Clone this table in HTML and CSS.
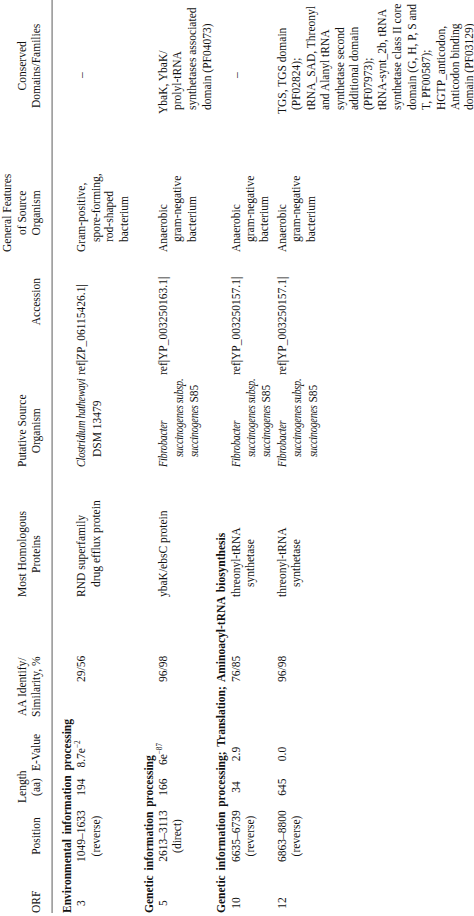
FILE: index.html
```html
<!DOCTYPE html>
<html>
<head>
<meta charset="utf-8">
<link rel="stylesheet" href="styles.css">
</head>
<body>
<div class="page">
<table class="orf">
<colgroup>
<col class="c-orf"><col class="c-pos"><col class="c-len"><col class="c-ev"><col class="c-aa"><col class="c-prot"><col class="c-org"><col class="c-acc"><col class="c-gen"><col class="c-dom">
</colgroup>
<thead>
<tr>
<th class="ctr">ORF</th>
<th class="ctr pos">Position</th>
<th class="ctr">Length<br>(aa)</th>
<th class="ctr">E-Value</th>
<th class="aa-h"><span class="hd">AA Identify/<br>Similarity, %</span></th>
<th class="lft"><span class="hd">Most Homologous<br>Proteins</span></th>
<th class="lft"><span class="hd">Putative Source<br>Organism</span></th>
<th class="acc-h">Accession</th>
<th class="lft"><span class="hd">General Features<br>of Source<br>Organism</span></th>
<th class="lft dom-h"><span class="hd">Conserved<br>Domains/Families</span></th>
</tr>
</thead>
<tbody class="grp first">
<tr class="ghead"><td colspan="10">Environmental information processing</td></tr>
<tr>
<td class="ctr">3</td>
<td class="ctr pos">1049–1633<br>(reverse)</td>
<td class="ctr">194</td>
<td class="ctr">8.7e<sup>−2</sup></td>
<td class="aa">29/56</td>
<td class="hang">RND superfamily<br>drug efflux protein</td>
<td class="hang"><i>Clostridium hathewayi</i><br>DSM 13479</td>
<td class="acc">ref|ZP_06115426.1|</td>
<td class="hang">Gram-positive,<br>spore-forming,<br>rod-shaped<br>bacterium</td>
<td class="dom"><span class="dash">–</span></td>
</tr>
</tbody>
<tbody class="grp second">
<tr class="ghead"><td colspan="10">Genetic information processing</td></tr>
<tr>
<td class="ctr">5</td>
<td class="ctr pos">2613–3113<br>(direct)</td>
<td class="ctr">166</td>
<td class="ctr">6e<sup>−87</sup></td>
<td class="aa">96/98</td>
<td class="hang">ybaK/ebsC protein</td>
<td class="hang"><i>Fibrobacter<br>succinogenes subsp.<br>succinogenes</i> S85</td>
<td class="acc">ref|YP_003250163.1|</td>
<td class="hang">Anaerobic<br>gram-negative<br>bacterium</td>
<td class="dom">YbaK, YbaK/<br>prolyl-tRNA<br>synthetases associated<br>domain (PF04073)</td>
</tr>
</tbody>
<tbody class="grp third">
<tr class="ghead"><td colspan="10">Genetic information processing; Translation; Aminoacyl-tRNA biosynthesis</td></tr>
<tr>
<td class="ctr">10</td>
<td class="ctr pos">6635–6739<br>(reverse)</td>
<td class="ctr">34</td>
<td class="ctr">2.9</td>
<td class="aa">76/85</td>
<td class="hang">threonyl-tRNA<br>synthetase</td>
<td class="hang"><i>Fibrobacter<br>succinogenes subsp.<br>succinogenes</i> S85</td>
<td class="acc">ref|YP_003250157.1|</td>
<td class="hang">Anaerobic<br>gram-negative<br>bacterium</td>
<td class="dom"><span class="dash">–</span></td>
</tr>
<tr>
<td class="ctr">12</td>
<td class="ctr pos">6863–8800<br>(reverse)</td>
<td class="ctr">645</td>
<td class="ctr">0.0</td>
<td class="aa">96/98</td>
<td class="hang">threonyl-tRNA<br>synthetase</td>
<td class="hang"><i>Fibrobacter<br>succinogenes subsp.<br>succinogenes</i> S85</td>
<td class="acc">ref|YP_003250157.1|</td>
<td class="hang">Anaerobic<br>gram-negative<br>bacterium</td>
<td class="dom">TGS, TGS domain<br>(PF02824);<br>tRNA_SAD, Threonyl<br>and Alanyl tRNA<br>synthetase second<br>additional domain<br>(PF07973);<br>tRNA-synt_2b, tRNA<br>synthetase class II core<br>domain (G, H, P, S and<br>T, PF00587);<br>HGTP_anticodon,<br>Anticodon binding<br>domain (PF03129)</td>
</tr>
</tbody>
</table>
</div>
</body>
</html>
```

FILE: styles.css
```css
html, body {
  margin: 0;
  padding: 0;
  background: #ffffff;
  overflow: hidden;
}

body {
  width: 474px;
  height: 916px;
}

/* The table is typeset upright, then turned a quarter-turn counter-clockwise
   and stretched a little across its rows, as in the scanned figure. */
.page {
  width: 916px;
  height: 423px;
  transform-origin: 0 0;
  transform: translateY(916px) rotate(-90deg) scale(1, 1.12);
  font-family: "Liberation Serif", "Times New Roman", serif;
  font-size: 11.5px;
  line-height: 12.86px;
  color: #111;
}

.orf {
  width: 916px;
  margin-top: -3px;
  table-layout: fixed;
  border-collapse: collapse;
  border-spacing: 0;
}

.c-orf { width: 20px; }
.c-pos { width: 90px; }
.c-len { width: 32px; }
.c-ev { width: 34px; }
.c-aa { width: 136px; }
.c-prot { width: 130px; }
.c-org { width: 92px; }
.c-acc { width: 123px; }
.c-gen { width: 140px; }
.c-dom { width: 119px; }

.orf th,
.orf td {
  padding: 0;
  white-space: nowrap;
  overflow: visible;
  font-weight: normal;
}

.orf thead th {
  vertical-align: bottom;
  padding-bottom: 7px;
  border-bottom: 1px solid #6e6e6e;
}

.orf tbody td {
  vertical-align: top;
}

.ctr { text-align: center; }
.pos { padding-left: 24px !important; }

.lft {
  text-align: left;
  padding-left: 4px !important;
}

.dom-h {
  padding-left: 8px !important;
}

.hd {
  display: inline-block;
  text-align: center;
}

.aa-h {
  text-align: left;
  padding-left: 20px !important;
}

.aa {
  text-align: left;
  padding-left: 55px !important;
}

.acc-h {
  text-align: right;
  padding-right: 22px !important;
}

.acc {
  text-align: left;
  padding-left: 4px !important;
}

.hang {
  text-align: left;
  padding-left: 14px !important;
  text-indent: -10px;
}

.dom {
  text-align: left;
  padding-left: 6px !important;
  text-indent: -4px;
}

.hang i {
  font-size: 0.9em;
  letter-spacing: -0.3px;
}

.dash {
  display: inline-block;
  margin-left: 40px;
}

.ghead td {
  font-weight: bold;
  word-spacing: 2px;
  text-align: left;
}

.first .ghead td { padding-top: 6.25px; }
.second .ghead td { padding-top: 9.4px; }
.third .ghead td { padding-top: 0; }

sup {
  font-size: 0.62em;
  line-height: 0;
  vertical-align: 0.6em;
}
```
